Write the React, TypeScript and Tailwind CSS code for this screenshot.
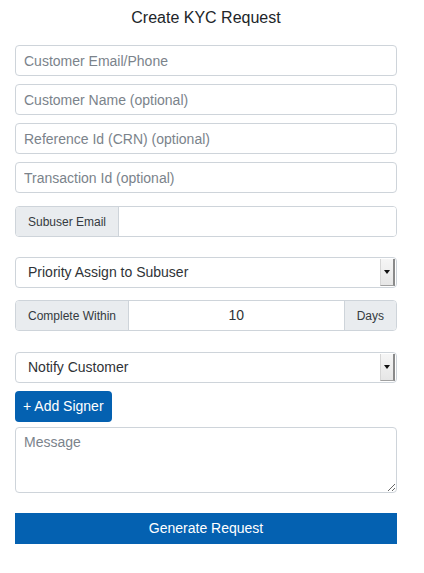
import React from 'react';

const font = { fontFamily: '"Liberation Sans", Arial, Helvetica, sans-serif' };

function TextInput({ placeholder }: { placeholder: string }) {
  return (
    <input
      type="text"
      placeholder={placeholder}
      className="block h-[31px] w-full rounded-[4px] border border-[#ced4da] bg-white px-[8px] text-[14px] text-[#495057] placeholder:text-[#7b838b] outline-none"
    />
  );
}

function Addon({ children, side }: { children: React.ReactNode; side: 'left' | 'right' }) {
  return (
    <span
      className={`flex shrink-0 items-center bg-[#e9ecef] px-[12px] text-[12px] text-[#343a40] ${
        side === 'left' ? 'border-r border-[#ced4da]' : 'border-l border-[#ced4da]'
      }`}
    >
      {children}
    </span>
  );
}

function FakeSelect({ value }: { value: string }) {
  return (
    <div className="flex h-[31px] w-full items-stretch rounded-[4px] border border-[#ced4da] bg-white">
      <span className="flex flex-1 items-center pl-[12px] text-[14px] text-[#2f3337]">{value}</span>
      <span className="my-px mr-px flex w-[15px] items-center justify-center border-l border-[#d6d6d6] border-r-2 border-r-[#8a8a8a] border-b border-b-[#a0a0a0] bg-gradient-to-b from-[#f6f6f6] to-[#e6e6e6]">
        <svg width="6" height="4" viewBox="0 0 6 4">
          <path d="M0 0h6L3 4z" fill="#111" />
        </svg>
      </span>
    </div>
  );
}

export default function App() {
  return (
    <div className="bg-white pt-[8px]" style={font}>
      <div className="ml-[15px] w-[382px]">
        <h1 className="text-center text-[16px] leading-[20px] text-[#212529]">Create KYC Request</h1>

        <div className="mt-[17px] flex flex-col gap-[8px]">
          <TextInput placeholder="Customer Email/Phone" />
          <TextInput placeholder="Customer Name (optional)" />
          <TextInput placeholder="Reference Id (CRN) (optional)" />
          <TextInput placeholder="Transaction Id (optional)" />
        </div>

        <div className="mt-[13px] flex h-[31px] overflow-hidden rounded-[4px] border border-[#ced4da]">
          <Addon side="left">Subuser Email</Addon>
          <input type="text" className="min-w-0 flex-1 bg-white px-[8px] text-[14px] outline-none" />
        </div>

        <div className="mt-[20px]">
          <FakeSelect value="Priority Assign to Subuser" />
        </div>

        <div className="mt-[12px] flex h-[31px] overflow-hidden rounded-[4px] border border-[#ced4da]">
          <Addon side="left">Complete Within</Addon>
          <input
            type="text"
            defaultValue="10"
            className="min-w-0 flex-1 bg-white text-center text-[14px] text-[#2f3337] outline-none"
          />
          <Addon side="right">Days</Addon>
        </div>

        <div className="mt-[21px]">
          <FakeSelect value="Notify Customer" />
        </div>

        <button className="mt-[8px] flex h-[31px] items-center rounded-[4px] bg-[#0461b1] px-[8px] text-[14px] text-white">
          + Add Signer
        </button>

        <textarea
          placeholder="Message"
          className="mt-[5px] block h-[66px] w-full rounded-[4px] border border-[#ced4da] bg-white px-[8px] py-[4px] text-[14px] text-[#495057] placeholder:text-[#7b838b] outline-none"
        />

        <button className="mt-[20px] flex h-[31px] w-full items-center justify-center bg-[#0461b1] text-[14px] text-white">
          Generate Request
        </button>
      </div>
    </div>
  );
}
